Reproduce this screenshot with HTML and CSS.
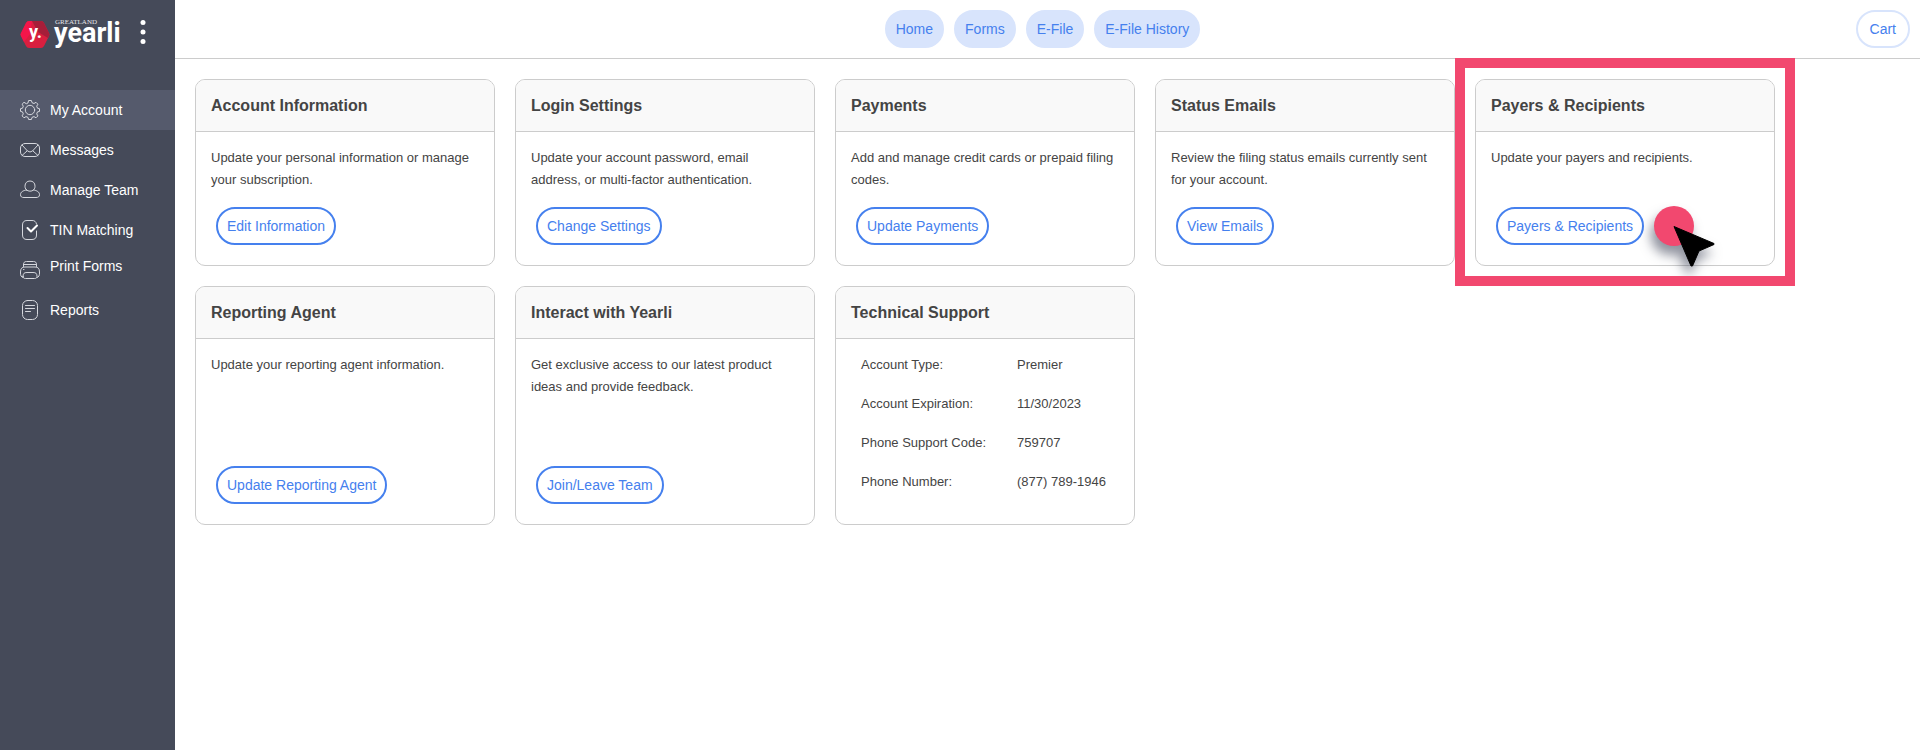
FILE: index.html
```html
<!DOCTYPE html>
<html lang="en">
<head>
    <meta charset="UTF-8">
    <meta name="viewport" content="width=device-width, initial-scale=1.0">
    <title>Yearli - My Account</title>
    <link rel="stylesheet" href="styles.css">
</head>
<body>

<aside class="sidebar">
    <div class="brand">
        <a href="#" class="logo" aria-label="Greatland Yearli">
            <svg width="104" height="36" viewBox="0 0 104 36">
                <path d="M9 7h12q2 0 3 2l5 10q1 1.500 0 3l-5 10q-1 2-3 2H9q-2 0-3-2L1 22q-1-1.500 0-3L6 9q1-2 3-2z" fill="#d91f3f"/>
                <path d="M9 7h3l-2 13-6 8-3-6q-1-1.500 0-3L6 9q1-2 3-2z" fill="#f3154a"/>
                <path d="M12 7h9q2 0 3 2l5 10q1 1.500 0 3l-1 2-10-6z" fill="#a61e39"/>
                <text x="9" y="24" class="logo-mark">y.</text>
                <text x="35" y="10" class="logo-small">GREATLAND</text>
                <text x="34" y="28" class="logo-name">yearli</text>
            </svg>
        </a>
        <button type="button" class="menu-button" aria-label="Menu">
            <svg width="6" height="26" viewBox="0 0 6 26" fill="#fff">
                <circle cx="3" cy="3.5" r="2.5"/>
                <circle cx="3" cy="13" r="2.5"/>
                <circle cx="3" cy="22.5" r="2.5"/>
            </svg>
        </button>
    </div>

    <nav class="side-nav">
        <a href="#" class="side-link active">
            <svg class="icon" viewBox="0 0 20 28">
                <circle cx="10" cy="14" r="4.7"/>
                <path d="M8 6.700 8.600 4.500h2.800l.6 2.200 2 .8 2-1.200 1.900 1.900-1.200 2 .8 2 2 .5v2.700l-2 .5-.8 2 1.200 2-1.900 1.900-2-1.200-2 .8-.6 2.100H8.600L8 21.400l-2-.8-2 1.200-1.900-1.900 1.200-2-.8-2-2-.5v-2.700l2-.5.8-2-1.200-2L4 6.300l2 1.200z"/>
            </svg>
            <span>My Account</span>
        </a>
        <a href="#" class="side-link">
            <svg class="icon" viewBox="0 0 20 28">
                <rect x="0.5" y="7.5" width="19" height="13" rx="4.5"/>
                <path d="M2 9l5.500 6q2.500 2 5 0L18 9M2 19.500l5-4.500M18 19.500l-5-4.500"/>
            </svg>
            <span>Messages</span>
        </a>
        <a href="#" class="side-link">
            <svg class="icon" viewBox="0 0 20 28">
                <path d="M6.500 14C5 12.500 5 11 5 10c0-3 2-5 5-5s5 2 5 5c0 1 0 2.500-1.500 4-1.700 1.600-5.300 1.600-7 0z"/>
                <path d="M6.500 14C3 14.500.5 16 .5 18.700c0 2 1.200 2.800 3.500 2.800h12c2.300 0 3.500-.8 3.500-2.800 0-2.700-2.500-4.200-6-4.700"/>
            </svg>
            <span>Manage Team</span>
        </a>
        <a href="#" class="side-link">
            <svg class="icon" viewBox="0 0 20 28">
                <path d="M16.500 8c-.5-2.500-2-3.500-4.500-3.500H7C4 4.500 2.500 6 2.500 9v10c0 3 1.500 4.500 4.500 4.500h5c3 0 4.500-1.500 4.500-4.500v-4"/>
                <path class="tick" d="M7.500 12l3.500 3.500 6-6"/>
            </svg>
            <span>TIN Matching</span>
        </a>
        <a href="#" class="side-link label-top">
            <svg class="icon" viewBox="0 0 20 28">
                <path d="M3.500 10.500V8.500c0-2 1-3 3-3h7c2 0 3 1 3 3v2M3.500 8.500h13"/>
                <path d="M3 21.500C1 21 .5 19.500.5 17v-1c0-3.500 1.500-5 4.500-5h10c3 0 4.500 1.500 4.500 5v1c0 2.500-.5 4-2.500 4.500"/>
                <path d="M3 20.500c0-3 1-4 4-4h6c3 0 4 1 4 4 0 1.500-1 2-2.500 2h-9c-1.500 0-2.500-.5-2.500-2zM3.500 13.500h.5"/>
            </svg>
            <span>Print Forms</span>
        </a>
        <a href="#" class="side-link">
            <svg class="icon" viewBox="0 0 20 28">
                <rect x="2.5" y="4.5" width="15" height="19" rx="5"/>
                <path d="M5.500 9.500h9M5.500 12.500h9M5.500 15.500h5"/>
            </svg>
            <span>Reports</span>
        </a>
    </nav>
</aside>

<div class="page">
    <header class="topbar">
        <nav class="top-nav">
            <a href="#" class="pill">Home</a>
            <a href="#" class="pill">Forms</a>
            <a href="#" class="pill">E-File</a>
            <a href="#" class="pill">E-File History</a>
        </nav>
        <a href="#" class="pill cart">Cart</a>
    </header>

    <main class="cards">
        <section class="card">
            <h2>Account Information</h2>
            <div class="card-body">
                <p>Update your personal information or manage your subscription.</p>
                <button type="button" class="btn">Edit Information</button>
            </div>
        </section>

        <section class="card">
            <h2>Login Settings</h2>
            <div class="card-body">
                <p>Update your account password, email address, or multi-factor authentication.</p>
                <button type="button" class="btn">Change Settings</button>
            </div>
        </section>

        <section class="card">
            <h2>Payments</h2>
            <div class="card-body">
                <p>Add and manage credit cards or prepaid filing codes.</p>
                <button type="button" class="btn">Update Payments</button>
            </div>
        </section>

        <section class="card">
            <h2>Status Emails</h2>
            <div class="card-body">
                <p>Review the filing status emails currently sent for your account.</p>
                <button type="button" class="btn">View Emails</button>
            </div>
        </section>

        <section class="card highlighted">
            <h2>Payers &amp; Recipients</h2>
            <div class="card-body">
                <p>Update your payers and recipients.</p>
                <button type="button" class="btn">Payers &amp; Recipients</button>
            </div>
            <svg class="pointer" width="80" height="80" viewBox="0 0 80 80">
                <circle cx="30" cy="30" r="20" fill="#f2486f"/>
                <path d="M30 30.500 70 47.500v1L55 55l-6.500 15h-1.500z" fill="#000" stroke="#000" stroke-linejoin="round"/>
            </svg>
        </section>

        <section class="card">
            <h2>Reporting Agent</h2>
            <div class="card-body">
                <p>Update your reporting agent information.</p>
                <button type="button" class="btn">Update Reporting Agent</button>
            </div>
        </section>

        <section class="card">
            <h2>Interact with Yearli</h2>
            <div class="card-body">
                <p>Get exclusive access to our latest product ideas and provide feedback.</p>
                <button type="button" class="btn">Join/Leave Team</button>
            </div>
        </section>

        <section class="card">
            <h2>Technical Support</h2>
            <div class="card-body">
                <table class="support">
                    <tr><th scope="row">Account Type:</th><td>Premier</td></tr>
                    <tr><th scope="row">Account Expiration:</th><td>11/30/2023</td></tr>
                    <tr><th scope="row">Phone Support Code:</th><td>759707</td></tr>
                    <tr><th scope="row">Phone Number:</th><td>(877) 789-1946</td></tr>
                </table>
            </div>
        </section>
    </main>
</div>

</body>
</html>
```

FILE: styles.css
```css
* {
    box-sizing: border-box;
}

body {
    margin: 0;
    min-height: 100vh;
    display: flex;
    background-color: #fff;
    color: #444;
    font-family: "Liberation Sans", Arial, sans-serif;
    font-size: 13px;
}

a {
    text-decoration: none;
}

/* Sidebar */
.sidebar {
    width: 175px;
    flex-shrink: 0;
    background-color: #454a59;
}

.brand {
    display: flex;
    align-items: center;
    gap: 16px;
    height: 90px;
    padding: 0 0 26px 20px;
}

.logo svg,
.menu-button svg {
    display: block;
}

.logo-mark,
.logo-name {
    fill: #fff;
    font-family: Roboto, sans-serif;
    font-weight: bold;
}

.logo-mark {
    font-size: 18px;
}

.logo-name {
    font-size: 27px;
}

.logo-small {
    fill: #e4e5e8;
    font-family: "Liberation Serif", serif;
    font-size: 7px;
}

.menu-button {
    padding: 0;
    border: none;
    background: none;
    cursor: pointer;
}

.side-link {
    display: flex;
    align-items: center;
    gap: 10px;
    padding: 6px 20px;
    color: #fff;
    font-size: 14px;
    line-height: 20px;
}

.side-link.active,
.side-link:hover {
    background-color: #555a6c;
}

.side-link.label-top {
    align-items: flex-start;
}

.icon {
    width: 20px;
    height: 28px;
    fill: none;
    stroke: #d5d7dd;
    stroke-width: 1;
    stroke-linecap: round;
    stroke-linejoin: round;
}

.icon .tick {
    stroke: #fff;
    stroke-width: 2;
}

/* Top bar */
.page {
    flex: 1;
    min-width: 0;
}

.topbar {
    display: grid;
    grid-template-columns: 1fr auto 1fr;
    padding: 10px 10px 10px 0;
    border-bottom: 1px solid #ccc;
}

.top-nav {
    grid-column: 2;
    display: flex;
    gap: 10px;
}

.pill,
.btn {
    padding: 9px;
    border: 2px solid #d8e4fc;
    border-radius: 19px;
    background-color: #d8e4fc;
    color: #4580ee;
    font-family: inherit;
    font-size: 14px;
    line-height: 16px;
}

.cart {
    justify-self: end;
    padding: 9px 12px;
    background-color: #fff;
}

/* Cards */
.cards {
    display: grid;
    grid-template-columns: repeat(auto-fill, 300px);
    gap: 20px;
    padding: 20px;
}

.card {
    position: relative;
    display: flex;
    flex-direction: column;
    border: 1px solid #ccc;
    border-radius: 10px;
}

.card h2 {
    margin: 0;
    padding: 15px;
    border-bottom: 1px solid #ccc;
    border-radius: 9px 9px 0 0;
    background-color: #f9f9f9;
    font-size: 16px;
    line-height: 21px;
}

.card-body {
    flex: 1;
    display: flex;
    flex-direction: column;
    align-items: flex-start;
    padding: 15px;
}

.card-body p {
    margin: 0 0 16px;
    line-height: 22px;
}

.btn {
    margin: auto 5px 5px;
    border-color: #4580ee;
    background-color: #fff;
    cursor: pointer;
}

.support {
    border-collapse: collapse;
    line-height: 22px;
}

.support th,
.support td {
    padding: 0 10px 17px;
    font-weight: normal;
    text-align: left;
}

.support th {
    width: 156px;
}

.support tr:last-child > * {
    padding-bottom: 16px;
}

/* Frame and pointer drawn over the highlighted card */
.highlighted::after {
    content: "";
    position: absolute;
    inset: -22px -21px -21px;
    border: 10px solid #f2486f;
    pointer-events: none;
}

.pointer {
    position: absolute;
    right: 50px;
    bottom: -11px;
    filter: drop-shadow(-3px 9px 6px rgba(30, 35, 60, 0.5));
    pointer-events: none;
}
```
